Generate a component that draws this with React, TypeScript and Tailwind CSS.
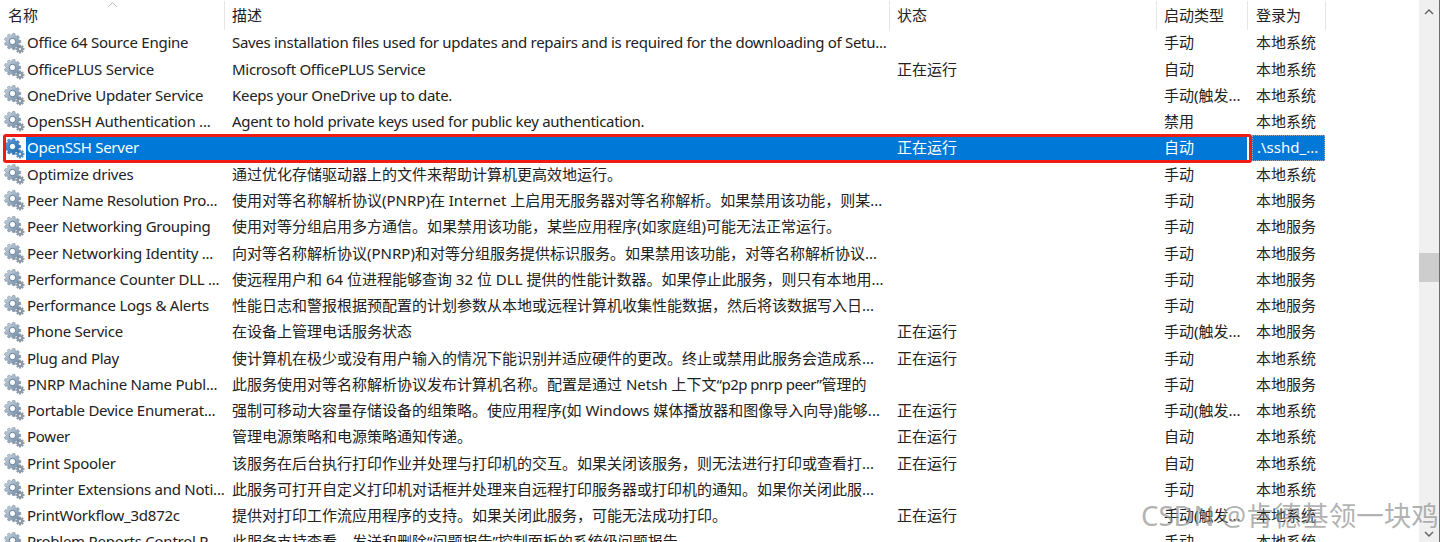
import React from "react";

type Row = { n: string; d?: React.ReactNode; s?: string; t: string; l: string; sel?: boolean };

const LS = "本地系统";
const NS = "本地服务";
const RUN = "正在运行";
const TRIG = "手动(触发...";

const rows: Row[] = [
  { n: "Office 64 Source Engine", d: "Saves installation files used for updates and repairs and is required for the downloading of Setu...", t: "手动", l: LS },
  { n: "OfficePLUS Service", d: "Microsoft OfficePLUS Service", s: RUN, t: "自动", l: LS },
  { n: "OneDrive Updater Service", d: "Keeps your OneDrive up to date.", t: TRIG, l: LS },
  { n: "OpenSSH Authentication ...", d: "Agent to hold private keys used for public key authentication.", t: "禁用", l: LS },
  { n: "OpenSSH Server", s: RUN, t: "自动", l: ".\\sshd_...", sel: true },
  { n: "Optimize drives", d: "通过优化存储驱动器上的文件来帮助计算机更高效地运行。", t: "手动", l: LS },
  { n: "Peer Name Resolution Pro...", d: "使用对等名称解析协议(PNRP)在 Internet 上启用无服务器对等名称解析。如果禁用该功能，则某...", t: "手动", l: NS },
  { n: "Peer Networking Grouping", d: "使用对等分组启用多方通信。如果禁用该功能，某些应用程序(如家庭组)可能无法正常运行。", t: "手动", l: NS },
  { n: "Peer Networking Identity ...", d: "向对等名称解析协议(PNRP)和对等分组服务提供标识服务。如果禁用该功能，对等名称解析协议...", t: "手动", l: NS },
  { n: "Performance Counter DLL ...", d: "使远程用户和 64 位进程能够查询 32 位 DLL 提供的性能计数器。如果停止此服务，则只有本地用...", t: "手动", l: NS },
  { n: "Performance Logs & Alerts", d: "性能日志和警报根据预配置的计划参数从本地或远程计算机收集性能数据，然后将该数据写入日...", t: "手动", l: NS },
  { n: "Phone Service", d: "在设备上管理电话服务状态", s: RUN, t: TRIG, l: NS },
  { n: "Plug and Play", d: "使计算机在极少或没有用户输入的情况下能识别并适应硬件的更改。终止或禁用此服务会造成系...", s: RUN, t: "手动", l: LS },
  {
    n: "PNRP Machine Name Publ...",
    d: (
      <>
        此服务使用对等名称解析协议发布计算机名称。配置是通过 Netsh 上下文
        <span className="tracking-[-0.5px]">“p2p pnrp peer”</span>管理的
      </>
    ),
    t: "手动",
    l: NS,
  },
  { n: "Portable Device Enumerat...", d: "强制可移动大容量存储设备的组策略。使应用程序(如 Windows 媒体播放器和图像导入向导)能够...", s: RUN, t: TRIG, l: LS },
  { n: "Power", d: "管理电源策略和电源策略通知传递。", s: RUN, t: "自动", l: LS },
  { n: "Print Spooler", d: "该服务在后台执行打印作业并处理与打印机的交互。如果关闭该服务，则无法进行打印或查看打...", s: RUN, t: "自动", l: LS },
  { n: "Printer Extensions and Noti...", d: "此服务可打开自定义打印机对话框并处理来自远程打印服务器或打印机的通知。如果你关闭此服...", t: "手动", l: LS },
  { n: "PrintWorkflow_3d872c", d: "提供对打印工作流应用程序的支持。如果关闭此服务，可能无法成功打印。", s: RUN, t: TRIG, l: LS },
  { n: "Problem Reports Control P...", d: "此服务支持查看、发送和删除“问题报告”控制面板的系统级问题报告。", t: "手动", l: LS },
];

function gearPath(cx: number, cy: number, r: number, teeth: number, h: number) {
  const pts: string[] = [];
  for (let i = 0; i < teeth; i++) {
    const a = (i / teeth) * Math.PI * 2;
    const w = Math.PI / teeth / 1.7;
    const p = (ang: number, rad: number) =>
      `${(cx + Math.cos(ang) * rad).toFixed(2)} ${(cy + Math.sin(ang) * rad).toFixed(2)}`;
    pts.push(p(a - w * 1.25, r), p(a - w * 0.7, r + h), p(a + w * 0.7, r + h), p(a + w * 1.25, r));
  }
  return "M" + pts.join("L") + "Z";
}

function Gear({ sel }: { sel?: boolean }) {
  const id = sel ? "gear-sel" : "gear-norm";
  const edge = sel ? "#2a6cab" : "#6f8396";
  const small = sel ? "#4f8bc4" : "#8a97a4";
  return (
    <svg width="22" height="22" viewBox="0 0 22 22" className="shrink-0">
      <defs>
        <linearGradient id={id} x1="0" y1="0" x2="1" y2="1">
          <stop offset="0" stopColor={sel ? "#5fa3e0" : "#d3dde7"} />
          <stop offset="1" stopColor={sel ? "#2468a8" : "#67829c"} />
        </linearGradient>
      </defs>
      <path d={gearPath(17, 17, 2.9, 8, 1.4)} fill={small} stroke={edge} strokeWidth="0.4" />
      <circle cx="17" cy="17" r="1" fill="#ffffff" />
      <path d={gearPath(9.5, 9.5, 6.3, 9, 1.9)} fill={`url(#${id})`} stroke={edge} strokeWidth="0.5" />
      <circle cx="9.5" cy="9.5" r="3.2" fill="#ffffff" stroke={sel ? "#1f5f9c" : "#52708c"} strokeWidth="0.9" />
    </svg>
  );
}

function ServiceRow({ r }: { r: Row }) {
  const latinDesc = typeof r.d === "string" && /^[\x00-\x7f]+$/.test(r.d);
  return (
    <div className="flex h-[26.28px] items-center whitespace-nowrap">
      <div className="flex w-[224px] shrink-0 items-center pl-[3px]">
        <Gear sel={r.sel} />
        <span className={`ml-[1px] flex h-[26px] flex-1 items-center pl-[1px] tracking-[-0.25px] ${r.sel ? "bg-[#0078d7] text-white" : ""}`}>{r.n}</span>
      </div>
      <div className={`flex h-[26px] w-[1023px] shrink-0 items-center ${r.sel ? "bg-[#0078d7] text-white" : ""}`}>
        <div className={`w-[665px] shrink-0 pl-[8px] ${latinDesc ? "tracking-[-0.3px]" : ""}`}>{r.d}</div>
        <div className="w-[267px] shrink-0 pl-[8px]">{r.s}</div>
        <div className="w-[91px] shrink-0 pl-[8px]">{r.t}</div>
      </div>
      <div className="w-[78px] shrink-0 pl-[9px]">
        {r.sel ? (
          <div className="ml-[-4px] flex h-[26px] items-center border border-dotted border-[#9aa7b2] bg-[#0078d7] pl-[4px] text-white">{r.l}</div>
        ) : (
          r.l
        )}
      </div>
    </div>
  );
}

function HeaderCell({ w, label, pad }: { w: string; label: string; pad: string }) {
  return <div className={`flex h-full shrink-0 items-center border-r border-[#e5e5e5] ${w} ${pad}`}>{label}</div>;
}

export default function App() {
  return (
    <div
      className="relative flex h-[542px] w-[1440px] overflow-hidden bg-white text-[15px] text-[#222222]"
      style={{ fontFamily: '"Noto Sans", "Noto Sans CJK SC", sans-serif' }}
    >
      <div className="w-[1419px] shrink-0">
        <div className="flex h-[29.5px] items-center pt-[1px]">
          <div className="relative flex h-full w-[225px] shrink-0 items-center border-r border-[#e5e5e5] pl-[8px]">
            名称
            <svg width="9" height="5" viewBox="0 0 9 5" className="absolute left-[108px] top-[1px]">
              <path d="M0.5 4.5 L4.5 0.7 L8.5 4.5" fill="none" stroke="#b5b5b5" strokeWidth="1" />
            </svg>
          </div>
          <HeaderCell w="w-[665px]" label="描述" pad="pl-[7px]" />
          <HeaderCell w="w-[267px]" label="状态" pad="pl-[7px]" />
          <HeaderCell w="w-[91px]" label="启动类型" pad="pl-[7px]" />
          <HeaderCell w="w-[78px]" label="登录为" pad="pl-[8px]" />
        </div>
        {rows.map((r) => (
          <ServiceRow key={r.n} r={r} />
        ))}
      </div>

      <div className="flex h-full w-[20px] shrink-0 flex-col items-center bg-[#f0f0f0]">
        <svg width="10" height="6" viewBox="0 0 10 6" className="mt-[9px] shrink-0">
          <path d="M1 5 L5 1 L9 5" fill="none" stroke="#606060" strokeWidth="1.4" />
        </svg>
        <div className="mt-[238px] h-[29px] w-full shrink-0 bg-[#cdcdcd]" />
        <svg width="10" height="6" viewBox="0 0 10 6" className="mt-auto mb-[5px] shrink-0">
          <path d="M1 1 L5 5 L9 1" fill="none" stroke="#606060" strokeWidth="1.4" />
        </svg>
      </div>
      <div className="w-px shrink-0 bg-[#6d6d6d]" />

      <div className="pointer-events-none absolute left-[3px] top-[134px] h-[29px] w-[1249px] rounded-[3px] border-[3px] border-[#f01c14]" />
      <div className="pointer-events-none absolute left-[1141px] top-[499px] whitespace-nowrap text-[27.5px] leading-[34px] text-[#8f8f8f]/70">
        CSDN @肯德基领一块鸡
      </div>
    </div>
  );
}
